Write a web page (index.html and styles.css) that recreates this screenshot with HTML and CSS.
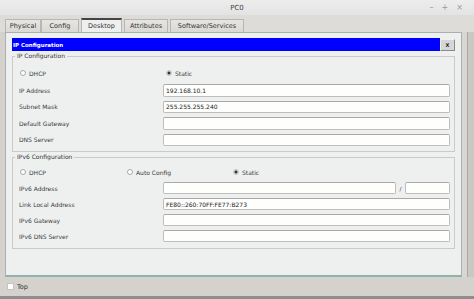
FILE: index.html
```html
<!DOCTYPE html>
<html lang="en">
<head>
  <meta charset="UTF-8" />
  <title>PC0</title>
  <link rel="stylesheet" href="styles.css">
</head>
<body>
<div class="window">

  <!-- Title bar -->
  <div class="titlebar">
    <span></span>
    <span class="title">PC0</span>
    <span class="controls"><span>&ndash;</span><span>+</span><span>&times;</span></span>
  </div>

  <!-- Tabs -->
  <div class="tabs">
    <div class="tab tab-physical">Physical</div>
    <div class="tab tab-config">Config</div>
    <div class="tab tab-desktop active">Desktop</div>
    <div class="tab tab-attr">Attributes</div>
    <div class="tab tab-soft">Software/Services</div>
  </div>

  <div class="body-row">
    <div class="panel">
      <div class="panel-head">
        <div class="head-bar">IP Configuration</div>
        <div class="head-close">X</div>
      </div>

      <fieldset class="group group-v4">
        <legend>IP Configuration</legend>
        <div class="radios">
          <div class="opt opt-v4-dhcp"><span class="radio"></span>DHCP</div>
          <div class="opt"><span class="radio on"></span>Static</div>
        </div>
        <div class="field first"><label>IP Address</label><span class="input">192.168.10.1</span></div>
        <div class="field"><label>Subnet Mask</label><span class="input">255.255.255.240</span></div>
        <div class="field"><label>Default Gateway</label><span class="input"></span></div>
        <div class="field"><label>DNS Server</label><span class="input"></span></div>
      </fieldset>

      <fieldset class="group group-v6">
        <legend>IPv6 Configuration</legend>
        <div class="radios">
          <div class="opt opt-v6-dhcp"><span class="radio"></span>DHCP</div>
          <div class="opt opt-v6-auto"><span class="radio"></span>Auto Config</div>
          <div class="opt"><span class="radio on"></span>Static</div>
        </div>
        <div class="field first">
          <label>IPv6 Address</label>
          <span class="input"></span>
          <span class="slash">/</span>
          <span class="input prefix"></span>
        </div>
        <div class="field"><label>Link Local Address</label><span class="input">FE80::260:70FF:FE77:B273</span></div>
        <div class="field"><label>IPv6 Gateway</label><span class="input"></span></div>
        <div class="field"><label>IPv6 DNS Server</label><span class="input"></span></div>
      </fieldset>
    </div>
    <div class="edge"></div>
  </div>

  <!-- Footer -->
  <div class="footer">
    <span class="check"></span>Top
  </div>
</div>
</body>
</html>
```

FILE: styles.css
```css
body {
  margin: 0;
  font-family: "DejaVu Sans", sans-serif;
  background: #d5d1cc;
  color: #3a3a3a;
}

.window {
  width: 474px;
  height: 299px;
  display: flex;
  flex-direction: column;
  overflow: hidden;
}

/* Title bar */
.titlebar {
  height: 15px;
  display: grid;
  grid-template-columns: 1fr auto 1fr;
  align-items: center;
  background: linear-gradient(#ededed, #e3e3e3);
  font-size: 7px;
  color: #444;
}

.controls {
  justify-self: end;
  display: flex;
  gap: 8px;
  padding-right: 11px;
  color: #999;
  font-size: 8px;
}

/* Tabs */
.tabs {
  height: 17px;
  display: flex;
  align-items: flex-end;
  padding-left: 5px;
  background: #dedcd9;
}

.tab {
  height: 13px;
  box-sizing: border-box;
  border: 1px solid #b8b6b3;
  border-bottom: none;
  background: linear-gradient(#e7e5e2, #dbd9d6);
  font-size: 6.5px;
  display: flex;
  align-items: center;
  justify-content: center;
  color: #333;
}

.tab-physical { width: 36px; }
.tab-config { width: 38px; }
.tab-desktop { width: 41px; margin-left: 2px; }
.tab-attr { width: 44px; margin-left: 2px; }
.tab-soft { width: 74px; margin-left: 2px; }

.tab.active {
  height: 14px;
  border-top: 2px solid #444;
  background: #eef0f0;
}

/* Main panel */
.body-row {
  height: 245px;
  display: flex;
  padding-left: 5px;
}

.panel {
  width: 457px;
  box-sizing: border-box;
  border: 1px solid #a9b0b0;
  border-bottom: 2px solid #8fb3ab;
  background: #eef0f0;
  padding: 5px 6px 0 6px;
}

.edge {
  flex: 1;
  background: linear-gradient(to right, #d9d7d4 0 5px, #a9a8a5 5px 6px, #c9c8c5 6px);
}

.panel-head {
  height: 13px;
  display: flex;
}

.head-bar {
  flex: 1;
  background: #0000ff;
  color: #fff;
  font-size: 5.5px;
  font-weight: bold;
  padding-left: 1px;
  display: flex;
  align-items: center;
}

.head-close {
  width: 15px;
  height: 12px;
  margin-top: 1px;
  box-sizing: border-box;
  background: #d6d6d6;
  border: 1px solid;
  border-color: #f0f0f0 #8a8a8a #8a8a8a #f0f0f0;
  font-size: 5px;
  font-weight: bold;
  color: #222;
  display: flex;
  align-items: center;
  justify-content: center;
}

/* Groups */
.group {
  margin: 1px 0 0;
  padding: 0 4px 5px 6px;
  border: 1px solid #cacaca;
  min-width: 0;
}

.group legend {
  font-size: 6px;
  line-height: 8px;
  padding: 0 2px;
  margin-left: -4px;
  color: #333;
}

.group-v6 {
  padding-bottom: 6px;
}

.radios {
  height: 10px;
  display: flex;
  align-items: center;
  margin-top: 8px;
  font-size: 6px;
}

.group-v6 .radios {
  margin-top: 6px;
}

.opt {
  display: flex;
  align-items: center;
  gap: 3px;
}

.opt-v4-dhcp { width: 146px; margin-left: 1px; }
.opt-v6-dhcp { width: 107px; margin-left: 1px; }
.opt-v6-auto { width: 106px; }

.radio {
  width: 6px;
  height: 6px;
  box-sizing: border-box;
  border: 1px solid #a8a8a8;
  border-radius: 50%;
  background: #fff;
}

.radio.on {
  border-color: #c4c4c4;
  background: radial-gradient(circle, #333 1.3px, #e8e8e8 1.8px);
}

.field {
  height: 12.5px;
  display: flex;
  align-items: center;
  margin-top: 4px;
  font-size: 6px;
}

.field.first {
  margin-top: 6px;
}

.group-v6 .field {
  height: 12px;
}

.group-v6 .field.first {
  margin-top: 5px;
}

.field label {
  width: 144px;
  flex: none;
}

.input {
  flex: 1;
  height: 100%;
  box-sizing: border-box;
  background: #fefefc;
  border: 1px solid #bdbdbd;
  border-top-color: #a9a9a9;
  border-radius: 2px;
  padding-left: 2px;
  display: flex;
  align-items: center;
  color: #222;
}

.input.prefix {
  flex: none;
  width: 45px;
}

.slash {
  width: 9px;
  text-align: center;
  flex: none;
}

/* Footer */
.footer {
  height: 19px;
  display: flex;
  align-items: center;
  gap: 3px;
  padding-left: 7px;
  font-size: 6.5px;
  color: #333;
  border-bottom: 3px solid #8e8e8e;
}

.check {
  width: 7px;
  height: 7px;
  box-sizing: border-box;
  background: #fff;
  border: 1px solid #c4c4c4;
}
```
